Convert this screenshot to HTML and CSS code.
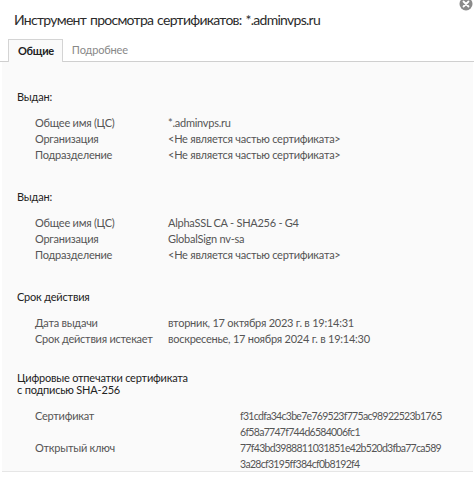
FILE: index.html
```html
<!DOCTYPE html>
<html lang="ru">
<head>
<meta charset="utf-8">
<title>Сертификат</title>
<link rel="stylesheet" href="styles.css">
</head>
<body>
<div class="dialog">
  <span class="close" aria-label="Закрыть">
    <svg width="14" height="14" viewBox="0 0 14 14"><circle cx="7" cy="7" r="6.5" fill="#8a8a8a"/><path d="M4.5 4.5 L9.5 9.5 M9.5 4.5 L4.5 9.5" stroke="#fff" stroke-width="1.8" stroke-linecap="round"/></svg>
  </span>
  <h1 class="title">Инструмент просмотра сертификатов: *.adminvps.ru</h1>
  <div class="tabs">
    <div class="tab active">Общие</div>
    <div class="tab">Подробнее</div>
  </div>
  <div class="panel">
    <section class="section">
      <h2 class="heading">Выдан:</h2>
      <dl class="rows">
        <dt>Общее имя (ЦС)</dt><dd>*.adminvps.ru</dd>
        <dt>Организация</dt><dd>&lt;Не является частью сертификата&gt;</dd>
        <dt>Подразделение</dt><dd>&lt;Не является частью сертификата&gt;</dd>
      </dl>
    </section>
    <section class="section">
      <h2 class="heading">Выдан:</h2>
      <dl class="rows">
        <dt>Общее имя (ЦС)</dt><dd>AlphaSSL CA - SHA256 - G4</dd>
        <dt>Организация</dt><dd>GlobalSign nv-sa</dd>
        <dt>Подразделение</dt><dd>&lt;Не является частью сертификата&gt;</dd>
      </dl>
    </section>
    <section class="section">
      <h2 class="heading">Срок действия</h2>
      <dl class="rows">
        <dt>Дата выдачи</dt><dd>вторник, 17 октября 2023 г. в 19:14:31</dd>
        <dt>Срок действия истекает</dt><dd>воскресенье, 17 ноября 2024 г. в 19:14:30</dd>
      </dl>
    </section>
    <section class="section tight">
      <h2 class="heading two">Цифровые отпечатки сертификата<br>с подписью SHA-256</h2>
      <dl class="rows hashes">
        <dt>Сертификат</dt><dd><span>f31cdfa34c3be7e769523f775ac98922523b1765</span><span>6f58a7747f744d6584006fc1</span></dd>
        <dt>Открытый ключ</dt><dd><span>77f43bd3988811031851e42b520d3fba77ca589</span><span>3a28cf3195ff384cf0b8192f4</span></dd>
      </dl>
    </section>
  </div>
</div>
</body>
</html>
```
FILE: styles.css
```css
* { box-sizing: border-box; }
html, body { margin: 0; padding: 0; background: #fff; }
body {
  font-family: Lato, "Noto Sans", sans-serif;
  color: #333;
  width: 474px;
  height: 479px;
  overflow: hidden;
}
.dialog { position: relative; height: 479px; }
.close { position: absolute; right: 1px; top: -3px; line-height: 0; }
.title {
  margin: 0;
  padding: 9px 0 0 14px;
  height: 39px;
  font-size: 14px;
  font-weight: 400;
  line-height: 22px;
  letter-spacing: -0.72px;
  word-spacing: 1px;
  color: #2b2b2b;
  white-space: nowrap;
}
.tabs {
  display: flex;
  padding-left: 8px;
  height: 23px;
  border-bottom: 1px solid #cfcfcf;
}
.tab {
  font-size: 11px;
  line-height: 22px;
  padding: 0 9px;
  color: #888;
  letter-spacing: -0.15px;
}
.tab.active {
  color: #222;
  font-weight: 700;
  background: #fafafa;
  border: 1px solid #d4d4d4;
  border-bottom: none;
  height: 23px;
  margin-bottom: -1px;
  padding: 0 8px 0 9px;
  letter-spacing: -0.3px;
}
.panel {
  background: #fafafa;
  height: 410px;
  margin: 0 1px 0 2px;
  border-bottom: 1px solid #e6e6e6;
  padding: 27px 0 0 15px;
}
.section + .section { margin-top: 26px; }
.section + .section.tight { margin-top: 25px; }
.heading {
  margin: 0 0 10px;
  font-size: 11px;
  font-weight: 400;
  line-height: 16px;
  letter-spacing: -0.2px;
  color: #222;
}
.heading.two { line-height: 12px; margin-bottom: 12px; }
.rows {
  margin: 0;
  padding-left: 18px;
  display: grid;
  grid-template-columns: 133px 1fr;
  font-size: 11px;
  line-height: 16px;
  letter-spacing: -0.25px;
  color: #555;
  white-space: nowrap;
}
.rows dt, .rows dd { margin: 0; }
.hashes { grid-template-columns: 205px 1fr; }
.hashes dd { font-size: 10.5px; letter-spacing: -0.7px; }
.hashes dd span { display: block; }
```
